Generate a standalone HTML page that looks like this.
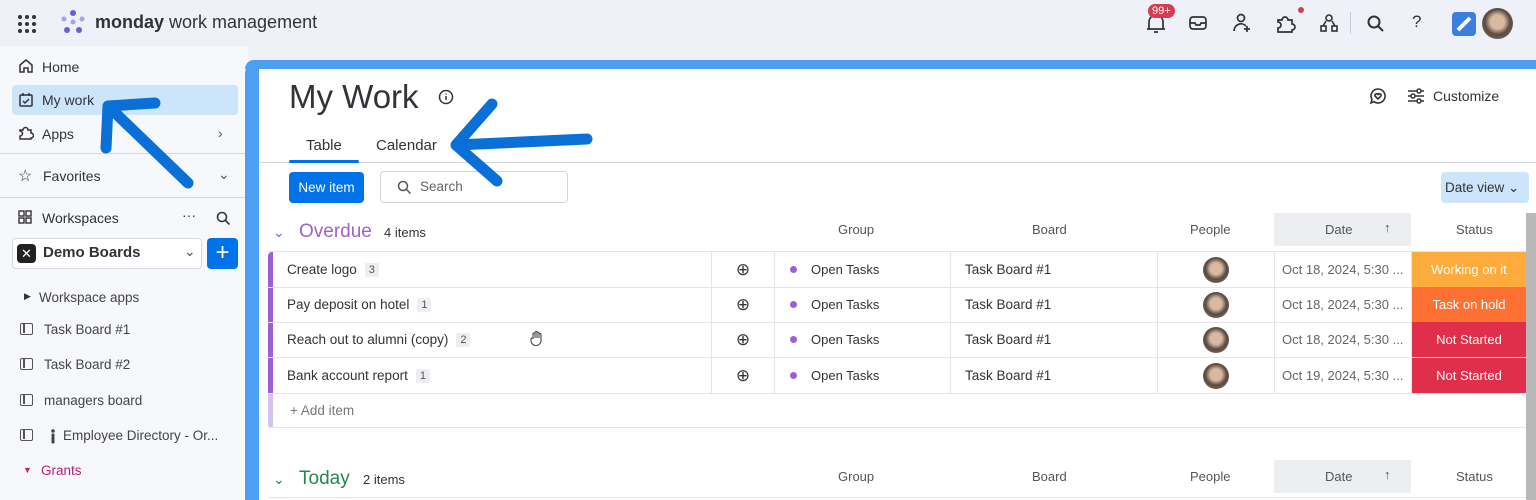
<!DOCTYPE html>
<html><head><meta charset="utf-8"><style>
*{box-sizing:border-box;margin:0;padding:0}
body{width:1536px;height:500px;overflow:hidden;background:#eef1f8;font-family:"Liberation Sans",sans-serif;color:#323338;position:relative}
.a{position:absolute;white-space:nowrap}
.side{position:absolute;left:0;top:46px;width:248px;height:454px;background:#f7f8fc}
.t14{font-size:14px}
.blue-l{position:absolute;left:245px;top:60px;width:14px;height:440px;background:#4d9ff3;border-radius:14px 0 0 0}
.blue-t{position:absolute;left:245px;top:60px;width:1291px;height:9px;background:#4d9ff3;border-radius:10px 0 0 0}
.main{position:absolute;left:259px;top:69px;width:1277px;height:431px;background:#fff}
.row{position:absolute;left:268px;width:1258px;height:36px;border-bottom:1px solid #e3e5ea}
.cell{position:absolute;top:0;height:100%;border-left:1px solid #e3e5ea;font-size:13px;display:flex;align-items:center}
.badge{display:inline-block;background:#eceef2;font-size:11px;padding:1px 4px;margin-left:8px;border-radius:2px;color:#555}
.st{color:#fff;justify-content:center;font-size:13px}
.av{width:26px;height:26px;border-radius:50%;background:radial-gradient(circle at 50% 45%,#d9b9a2 0 30%,#5a4a40 55%,#8a8078 100%)}
.hd{position:absolute;font-size:13px;color:#555}
.dot{display:inline-block;width:7px;height:7px;border-radius:50%;background:#9d5fd2;margin-right:14px}
.bi{position:absolute;left:20px;width:13px;height:12px;border:1.5px solid #555;border-radius:2px}
.bi:after{content:"";position:absolute;left:2px;top:0;width:1.5px;height:9px;background:#555}
</style></head><body>
<!-- top bar -->
<svg class="a" style="left:17px;top:14px" width="20" height="20" viewBox="0 0 20 20" fill="#333"><circle cx="3" cy="3" r="2"/><circle cx="10" cy="3" r="2"/><circle cx="17" cy="3" r="2"/><circle cx="3" cy="10" r="2"/><circle cx="10" cy="10" r="2"/><circle cx="17" cy="10" r="2"/><circle cx="3" cy="17" r="2"/><circle cx="10" cy="17" r="2"/><circle cx="17" cy="17" r="2"/></svg>
<svg class="a" style="left:60px;top:10px" width="26" height="24" viewBox="0 0 26 24" fill="#6b5fd6"><circle cx="13" cy="3" r="3"/><circle cx="4" cy="9" r="2.5" fill="#a99ef0"/><circle cx="22" cy="9" r="2.5" fill="#a99ef0"/><circle cx="13" cy="12" r="2.5" fill="#a99ef0"/><circle cx="7" cy="20" r="3"/><circle cx="19" cy="20" r="3"/></svg>
<div class="a" style="left:95px;top:12px;font-size:18px;color:#333"><b>monday</b> work management</div>
<svg class="a" style="left:1145px;top:12px" width="22" height="22" fill="none" stroke="#333" stroke-width="1.7"><path d="M4 17V10a7 7 0 0 1 14 0v7zM2 17h18M9 20h4"/></svg>
<div class="a" style="left:1148px;top:4px;background:#d83a52;color:#fff;font-size:11px;padding:1px 4px;border-radius:8px">99+</div>
<svg class="a" style="left:1188px;top:14px" width="20" height="18" fill="none" stroke="#333" stroke-width="1.7"><rect x="2" y="3" width="16" height="12" rx="3"/><path d="M2 9h5l1 2h4l1-2h5"/></svg>
<svg class="a" style="left:1232px;top:12px" width="20" height="22" fill="none" stroke="#333" stroke-width="1.7"><circle cx="9" cy="6" r="3.5"/><path d="M2 19a7 7 0 0 1 12-5M15 14v6M12 17h6"/></svg>
<svg class="a" style="left:1274px;top:12px" width="22" height="22" fill="none" stroke="#333" stroke-width="1.7"><path d="M4 8h4a3 3 0 0 1 6 0h4v4a3 3 0 0 1 0 6v2H4v-4a3 3 0 0 0 0-6z"/></svg>
<div class="a" style="left:1298px;top:7px;width:6px;height:6px;border-radius:50%;background:#d83a52"></div>
<svg class="a" style="left:1318px;top:12px" width="22" height="22" fill="none" stroke="#333" stroke-width="1.6"><circle cx="11" cy="6" r="3"/><rect x="3" y="14" width="5" height="5"/><rect x="14" y="14" width="5" height="5"/><path d="M8 9l-3 5M14 9l3 5"/></svg>
<div class="a" style="left:1350px;top:12px;width:1px;height:22px;background:#ccd"></div>
<svg class="a" style="left:1367px;top:15px" width="17" height="17" viewBox="0 0 17 17" fill="none" stroke="#333" stroke-width="2"><circle cx="7" cy="7" r="5.5"/><path d="M11 11l5 5"/></svg>
<div class="a" style="left:1412px;top:12px;font-size:17px;color:#333">?</div>
<div class="a" style="left:1452px;top:12px;width:24px;height:24px;background:#3d7de0;border-radius:4px"></div>
<svg class="a" style="left:1452px;top:12px" width="24" height="24"><path d="M6 18L18 6" stroke="#fff" stroke-width="4"/></svg>
<div class="a av" style="left:1482px;top:8px;width:31px;height:31px"></div>

<!-- sidebar -->
<div class="side"></div>
<div class="a" style="left:12px;top:85px;width:226px;height:30px;background:#cce5fb;border-radius:4px"></div>
<svg class="a" style="left:18px;top:58px" width="16" height="16" fill="none" stroke="#333" stroke-width="1.5"><path d="M2 7l6-5 6 5v7H10v-4H6v4H2z"/></svg>
<div class="a t14" style="left:42px;top:59px">Home</div>
<svg class="a" style="left:18px;top:92px" width="16" height="16" fill="none" stroke="#333" stroke-width="1.5"><rect x="2" y="3" width="12" height="11" rx="1"/><path d="M5 1v3M11 1v3M5 9l2 2 4-4"/></svg>
<div class="a t14" style="left:42px;top:92px">My work</div>
<svg class="a" style="left:18px;top:125px" width="16" height="16" fill="none" stroke="#333" stroke-width="1.5"><path d="M2 5h3a2.5 2.5 0 0 1 5 0h3v3a2.5 2.5 0 0 1 0 5v1H2v-3a2.5 2.5 0 0 0 0-5z"/></svg>
<div class="a t14" style="left:42px;top:126px">Apps</div>
<div class="a t14" style="left:218px;top:125px;color:#555">›</div>
<div class="a" style="left:0;top:153px;width:245px;height:1px;background:#d5d8e0"></div>
<div class="a" style="left:18px;top:166px;font-size:16px">☆</div>
<div class="a t14" style="left:43px;top:168px">Favorites</div>
<div class="a t14" style="left:218px;top:166px;color:#555">⌄</div>
<div class="a" style="left:0;top:197px;width:245px;height:1px;background:#d5d8e0"></div>
<svg class="a" style="left:18px;top:210px" width="14" height="14" fill="none" stroke="#333" stroke-width="1.4"><rect x="1" y="1" width="5" height="5"/><rect x="8" y="1" width="5" height="5"/><rect x="1" y="8" width="5" height="5"/><rect x="8" y="8" width="5" height="5"/></svg>
<div class="a t14" style="left:42px;top:210px">Workspaces</div>
<div class="a t14" style="left:182px;top:207px">···</div>
<svg class="a" style="left:216px;top:211px" width="14" height="14" fill="none" stroke="#333" stroke-width="1.6"><circle cx="6" cy="6" r="4.5"/><path d="M9.5 9.5l4 4"/></svg>
<div class="a" style="left:12px;top:238px;width:190px;height:31px;border:1px solid #d5d8e0;border-radius:4px;background:#fff"></div>
<div class="a" style="left:17px;top:244px;width:19px;height:19px;background:#222;border-radius:4px;color:#fff;font-size:13px;text-align:center;line-height:19px">✕</div>
<div class="a" style="left:43px;top:244px;font-size:15px;font-weight:bold">Demo Boards</div>
<div class="a t14" style="left:184px;top:243px;color:#555">⌄</div>
<div class="a" style="left:207px;top:238px;width:31px;height:31px;background:#0073ea;border-radius:4px;color:#fff;font-size:24px;text-align:center;line-height:30px">+</div>
<div class="a" style="left:24px;top:291px;font-size:9px">▶</div>
<div class="a" style="left:39px;top:290px;font-size:13.5px;color:#444">Workspace apps</div>
<div class="bi" style="top:323px"></div>
<div class="a" style="left:44px;top:322px;font-size:13.5px;color:#444">Task Board #1</div>
<div class="bi" style="top:358px"></div>
<div class="a" style="left:44px;top:357px;font-size:13.5px;color:#444">Task Board #2</div>
<div class="bi" style="top:394px"></div>
<div class="a" style="left:44px;top:393px;font-size:13.5px;color:#444">managers board</div>
<div class="bi" style="top:429px"></div>
<svg class="a" style="left:49px;top:429px" width="8" height="15" fill="#444"><circle cx="4" cy="2" r="1.8"/><rect x="2.5" y="4.5" width="3" height="10" rx="1"/></svg>
<div class="a" style="left:63px;top:428px;font-size:13.5px;color:#444">Employee Directory - Or...</div>
<div class="a" style="left:23px;top:465px;font-size:9px;color:#c0257a">▼</div>
<div class="a" style="left:41px;top:463px;font-size:13.5px;color:#b3246f">Grants</div>

<!-- main -->
<div class="blue-t"></div><div class="blue-l"></div>
<div class="main"></div>
<div class="a" style="left:289px;top:78px;font-size:33px;color:#323338">My Work</div>
<svg class="a" style="left:438px;top:89px" width="16" height="16" fill="none" stroke="#333" stroke-width="1.5"><circle cx="8" cy="8" r="6.5"/><path d="M8 7v4M8 4.5v1"/></svg>
<svg class="a" style="left:1369px;top:87px" width="18" height="18" fill="none" stroke="#333" stroke-width="1.6"><path d="M9 2a7 7 0 1 1-4 12.7L2 16l1-3.5A7 7 0 0 1 9 2z"/><path d="M9 12l-3-3a1.7 1.7 0 0 1 3-1.5a1.7 1.7 0 0 1 3 1.5z"/></svg>
<svg class="a" style="left:1407px;top:87px" width="18" height="18" fill="none" stroke="#333" stroke-width="1.5"><path d="M1 4h16M1 9h16M1 14h16"/><circle cx="12" cy="4" r="2" fill="#fff"/><circle cx="6" cy="9" r="2" fill="#fff"/><circle cx="12" cy="14" r="2" fill="#fff"/></svg>
<div class="a" style="left:1433px;top:88px;font-size:14px;color:#333">Customize</div>
<div class="a" style="left:306px;top:137px;font-size:15px">Table</div>
<div class="a" style="left:376px;top:137px;font-size:15px">Calendar</div>
<div class="a" style="left:260px;top:162px;width:1276px;height:1px;background:#d0d4dc"></div>
<div class="a" style="left:289px;top:160px;width:70px;height:3px;background:#0073ea;border-radius:2px"></div>
<div class="a" style="left:289px;top:172px;width:75px;height:31px;background:#0073ea;border-radius:4px;color:#fff;font-size:13.5px;text-align:center;line-height:31px">New item</div>
<div class="a" style="left:380px;top:171px;width:188px;height:32px;border:1px solid #d0d4dc;border-radius:4px"></div>
<svg class="a" style="left:397px;top:180px" width="14" height="14" fill="none" stroke="#555" stroke-width="1.5"><circle cx="6" cy="6" r="4.5"/><path d="M9.5 9.5l4 4"/></svg>
<div class="a" style="left:420px;top:179px;font-size:13.5px;color:#666">Search</div>
<div class="a" style="left:1441px;top:172px;width:88px;height:31px;background:#cce5fb;border-radius:4px;font-size:13.5px;line-height:31px;padding-left:4px">Date view ⌄</div>

<!-- overdue group -->
<div class="a" style="left:273px;top:224px;font-size:14px;color:#8a5cc9">⌄</div>
<div class="a" style="left:299px;top:221px;font-size:19px;color:#9d64c9">Overdue</div>
<div class="a" style="left:384px;top:225px;font-size:13px;color:#333">4 items</div>
<div class="hd" style="left:838px;top:222px">Group</div>
<div class="hd" style="left:1032px;top:222px">Board</div>
<div class="hd" style="left:1190px;top:222px">People</div>
<div class="a" style="left:1274px;top:213px;width:137px;height:33px;background:#eceef2"></div>
<div class="hd" style="left:1325px;top:222px">Date</div>
<div class="hd" style="left:1384px;top:220px">↑</div>
<div class="hd" style="left:1456px;top:222px">Status</div>
<div class="a" style="left:1526px;top:213px;width:10px;height:287px;background:#b8b8b8"></div>
<div class="a" style="left:268px;top:251px;width:1258px;height:1px;background:#e3e5ea"></div>
<div class="a" style="left:268px;top:252px;width:5px;height:141px;background:#9d5fd2;border-radius:4px 0 0 0"></div>
<div class="a" style="left:268px;top:393px;width:5px;height:35px;background:#d6c2ee;border-radius:0 0 0 4px"></div>

<div class="row" style="top:252px"><div class="cell" style="left:19px;border:0;font-size:13.5px">Create logo<span class="badge">3</span></div>
<div class="cell" style="left:443px;width:63px;justify-content:center;font-size:17px">⊕</div><div class="cell" style="left:506px;width:176px;padding-left:15px"><span class="dot"></span>Open Tasks</div><div class="cell" style="left:682px;width:207px;padding-left:14px;font-size:13.5px">Task Board #1</div><div class="cell" style="left:889px;width:117px;justify-content:center"><div class="av"></div></div><div class="cell" style="left:1006px;width:137px;padding-left:7px;color:#666">Oct 18, 2024, 5:30 ...</div><div class="cell st" style="left:1143px;width:115px;background:#fdab3d">Working on it</div></div>
<div class="row" style="top:287px"><div class="cell" style="left:19px;border:0;font-size:13.5px">Pay deposit on hotel<span class="badge">1</span></div>
<div class="cell" style="left:443px;width:63px;justify-content:center;font-size:17px">⊕</div><div class="cell" style="left:506px;width:176px;padding-left:15px"><span class="dot"></span>Open Tasks</div><div class="cell" style="left:682px;width:207px;padding-left:14px;font-size:13.5px">Task Board #1</div><div class="cell" style="left:889px;width:117px;justify-content:center"><div class="av"></div></div><div class="cell" style="left:1006px;width:137px;padding-left:7px;color:#666">Oct 18, 2024, 5:30 ...</div><div class="cell st" style="left:1143px;width:115px;background:#ff7033">Task on hold</div></div>
<div class="row" style="top:322px"><div class="cell" style="left:19px;border:0;font-size:13.5px">Reach out to alumni (copy)<span class="badge">2</span></div>
<div class="cell" style="left:443px;width:63px;justify-content:center;font-size:17px">⊕</div><div class="cell" style="left:506px;width:176px;padding-left:15px"><span class="dot"></span>Open Tasks</div><div class="cell" style="left:682px;width:207px;padding-left:14px;font-size:13.5px">Task Board #1</div><div class="cell" style="left:889px;width:117px;justify-content:center"><div class="av"></div></div><div class="cell" style="left:1006px;width:137px;padding-left:7px;color:#666">Oct 18, 2024, 5:30 ...</div><div class="cell st" style="left:1143px;width:115px;background:#df2f4a">Not Started</div></div>
<div class="row" style="top:358px"><div class="cell" style="left:19px;border:0;font-size:13.5px">Bank account report<span class="badge">1</span></div>
<div class="cell" style="left:443px;width:63px;justify-content:center;font-size:17px">⊕</div><div class="cell" style="left:506px;width:176px;padding-left:15px"><span class="dot"></span>Open Tasks</div><div class="cell" style="left:682px;width:207px;padding-left:14px;font-size:13.5px">Task Board #1</div><div class="cell" style="left:889px;width:117px;justify-content:center"><div class="av"></div></div><div class="cell" style="left:1006px;width:137px;padding-left:7px;color:#666">Oct 19, 2024, 5:30 ...</div><div class="cell st" style="left:1143px;width:115px;background:#df2f4a">Not Started</div></div>
<div class="row" style="top:393px;height:35px"><div class="cell" style="left:22px;border:0;font-size:13.5px;color:#777">+ Add item</div></div>
<svg class="a" style="left:530px;top:330px" width="14" height="16" fill="none" stroke="#444" stroke-width="1.1"><path d="M3 9V4a1 1 0 0 1 2 0v4V2.5a1 1 0 0 1 2 0V8V3a1 1 0 0 1 2 0v5V4.5a1 1 0 0 1 2 0V10a5 5 0 0 1-10 1L1 9a1 1 0 0 1 2 0"/></svg>

<!-- today group -->
<div class="a" style="left:273px;top:471px;font-size:14px;color:#258750">⌄</div>
<div class="a" style="left:299px;top:468px;font-size:19px;color:#258750">Today</div>
<div class="a" style="left:363px;top:472px;font-size:13px;color:#333">2 items</div>
<div class="hd" style="left:838px;top:469px">Group</div>
<div class="hd" style="left:1032px;top:469px">Board</div>
<div class="hd" style="left:1190px;top:469px">People</div>
<div class="a" style="left:1274px;top:460px;width:137px;height:33px;background:#eceef2"></div>
<div class="hd" style="left:1325px;top:469px">Date</div>
<div class="hd" style="left:1384px;top:467px">↑</div>
<div class="hd" style="left:1456px;top:469px">Status</div>
<div class="a" style="left:268px;top:497px;width:1258px;height:1px;background:#e3e5ea"></div>

<!-- arrows -->
<svg class="a" style="left:0;top:0" width="1536" height="500" fill="none" stroke="#0a6fd6" stroke-width="11" stroke-linecap="round" stroke-linejoin="round">
<path d="M188 183L108 106M106 148L108 106L155 103"/>
<path d="M587 139L456 145M492 104L456 145L497 181"/>
</svg>
</body></html>
